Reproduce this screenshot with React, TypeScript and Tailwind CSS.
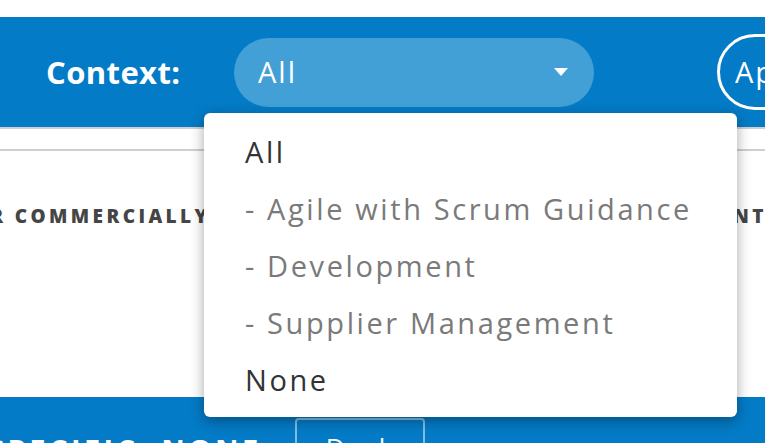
import { useState } from 'react';

const options = [
  { label: 'All', sub: false },
  { label: '- Agile with Scrum Guidance', sub: true },
  { label: '- Development', sub: true },
  { label: '- Supplier Management', sub: true },
  { label: 'None', sub: false },
];

export default function App() {
  const [selected] = useState('All');

  return (
    <div
      className="relative w-[765px] h-[443px] overflow-hidden bg-white"
      style={{ fontFamily: '"Open Sans", "Liberation Sans", sans-serif' }}
    >
      <div className="h-[17px] bg-white" />

      {/* Filter bar */}
      <div className="h-[110px] bg-[#047bc6] flex items-center">
        <span className="ml-[46px] w-[136px] shrink-0 text-[31px] font-bold text-white tracking-[0.4px] whitespace-nowrap">Context:</span>
        <button className="ml-[52px] w-[360px] h-[69px] shrink-0 rounded-full bg-[#42a0d7] flex items-center justify-between pl-[24px] pr-[26px] text-white">
          <span className="text-[29px] font-normal tracking-[2px]">{selected}</span>
          <span className="w-0 h-0 border-l-[7px] border-r-[7px] border-t-[8px] border-l-transparent border-r-transparent border-t-white" />
        </button>
        <button className="ml-[123px] h-[76px] w-[110px] shrink-0 rounded-full border-[3px] border-white pl-[15px] text-left text-white text-[29px] tracking-[2px] whitespace-nowrap">
          Apply
        </button>
      </div>

      <div className="h-[2px] bg-[#cfcfcf]" />
      <div className="h-[20px] bg-white" />
      <div className="h-[2px] bg-[#cfcfcf]" />

      {/* Table heading row */}
      <div className="h-[246px] flex pt-[51px] text-[#454545] font-extrabold text-[19px] tracking-[3.4px] whitespace-nowrap">
        <span className="-ml-[42px] w-[693px] shrink-0">FOR COMMERCIALLY</span>
        <span>CONTENT</span>
      </div>

      {/* Bottom bar */}
      <div className="h-[46px] bg-[#047bc6] flex items-start whitespace-nowrap">
        <span className="-ml-[12px] w-[307px] shrink-0 mt-[33px] leading-[40px] text-white font-bold text-[29px] tracking-[3.5px]">SPECIFIC: NONE</span>
        <button className="mt-[21px] w-[130px] h-[40px] shrink-0 rounded-t-[4px] border-[2px] border-white/50 text-white text-[26px] tracking-[2px] pt-[8px]">
          Dock
        </button>
      </div>

      {/* Open dropdown */}
      <div className="absolute left-[204px] top-[113px] w-[533px] h-[304px] rounded-[6px] bg-white shadow-[0_4px_14px_rgba(0,0,0,0.35)] pt-[10px]">
        {options.map((o) => (
          <div
            key={o.label}
            className={`h-[57px] flex items-center pl-[41px] text-[29px] tracking-[2.6px] whitespace-nowrap ${o.sub ? 'text-[#7a7a7a]' : 'text-[#333333]'}`}
          >
            {o.label}
          </div>
        ))}
      </div>
    </div>
  );
}
